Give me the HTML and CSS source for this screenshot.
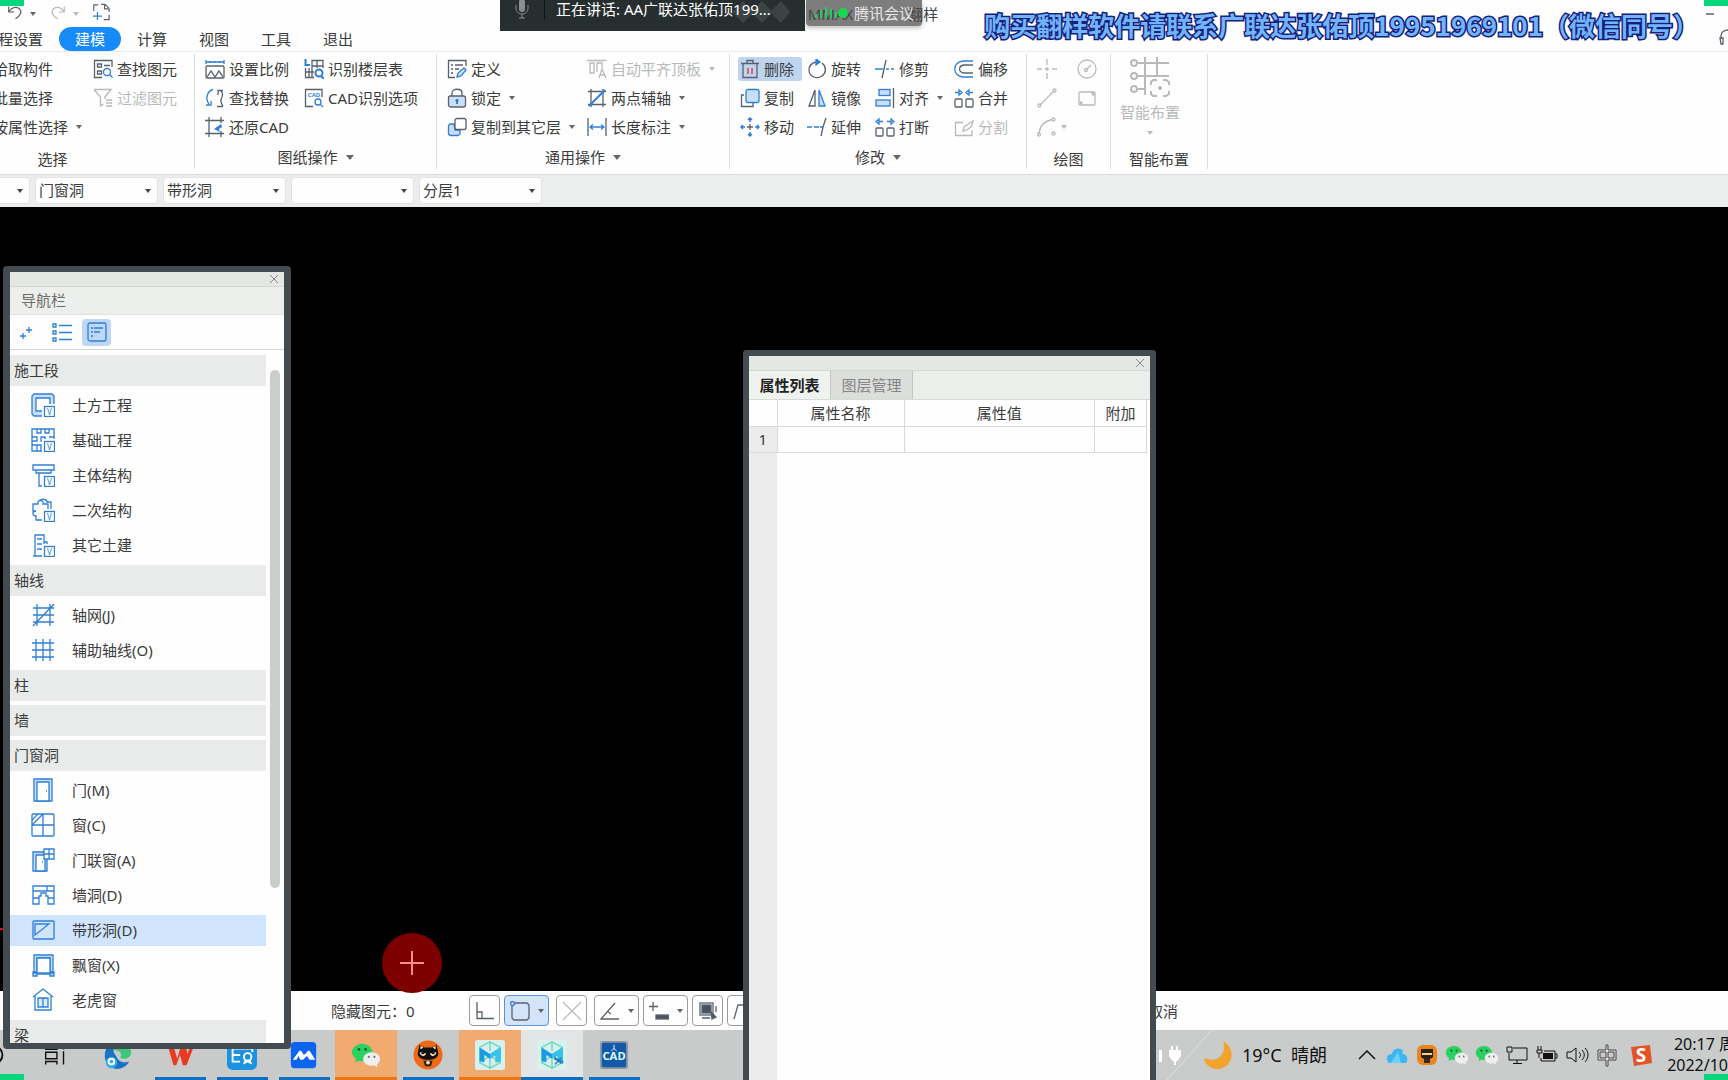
FILE: index.html
```
<!DOCTYPE html>
<html lang="zh-CN">
<head>
    <meta charset="UTF-8">
    <meta name="viewport" content="width=device-width, initial-scale=1.0">
    <title>MMAX 翻样</title>
    <link rel="stylesheet" href="styles.css">
</head>
<body>
    <svg class="defs" aria-hidden="true">
        <symbol id="vbadge" viewBox="0 0 24 24">
            <rect x="11" y="11" width="13" height="13" fill="#fff" stroke="none"/>
            <rect x="13.500" y="13.500" width="10" height="10" fill="#fff" stroke="#2f7fd0"/>
            <text x="18.500" y="21.500" font-size="8" text-anchor="middle" fill="#2f7fd0" stroke="none">V</text>
        </symbol>
        <symbol id="wechat" viewBox="0 0 32 32">
            <path d="M12 4C6 4 1 8 1 13c0 3 2 5.500 4.500 7L4.500 24l4-2c1 .3 2.300.5 3.500.5 6 0 11-4 11-9S18 4 12 4z" fill="#2ad060"/>
            <path d="M22 13c-5 0-9 3.200-9 7.200s4 7.300 9 7.300c1 0 2-.2 3-.4l3.500 1.900-1-3.200c2-1.300 3.500-3.300 3.500-5.600 0-4-4-7.200-9-7.200z" fill="#eee"/>
            <circle cx="8.500" cy="10" r="1.500" fill="#186030"/><circle cx="15.500" cy="10" r="1.500" fill="#186030"/>
            <circle cx="19" cy="18" r="1.200" fill="#777"/><circle cx="25" cy="18" r="1.200" fill="#777"/>
        </symbol>
        <symbol id="cat" viewBox="0 0 32 32">
            <circle cx="16" cy="16" r="15.500" fill="#ee6a14"/>
            <path d="M7 5l5 3h8l5-3 2 9c0 5-5 7-11 7S5 19 5 14z" fill="#111"/>
            <path d="M8 6l3 2-3 2zM24 6l-3 2 3 2z" fill="#fff3cf"/>
            <path d="M7 13l7 1.500c-1 3.500-6 3.500-7-1.500zM25 13l-7 1.500c1 3.500 6 3.500 7-1.500z" fill="#fff3cf"/>
            <path d="M9 14.500h3M20 14.500h3" stroke="#111" stroke-width="1.500"/>
            <path d="M11 22h10l-2 6h-6z" fill="#222"/><circle cx="16" cy="24" r="2" fill="#ffd9a0"/>
        </symbol>
        <symbol id="cube" viewBox="0 0 32 32">
            <rect x="0" y="0" width="32" height="32" rx="3" fill="#d9f1ee"/>
            <path d="M16 2l11 6v16l-11 6-11-6V8zM16 2v10M5 24l11-7 11 7M16 30V17" fill="none" stroke="#6fd6bd" stroke-width="1.500"/>
            <path d="M5 8l11 7 11-7v14l-5 2v-8l-6 4-6-4v8l-5-2z" fill="#1c9be2"/><path d="M27 8v14l-5 2v-8l-6 4v-5z" fill="#35c3ec"/>
        </symbol>
    </svg>

    <!-- 标题栏 -->
    <header class="titlebar">
        <button class="quick" aria-label="撤销"><svg class="ico" viewBox="0 0 20 20"><path d="M3 4v6h6M3.500 9.500C6 5 11 3.500 14.500 6c4 3.500 2 8-4 11.500"/></svg></button>
        <span class="caret"></span>
        <button class="quick off" aria-label="重做"><svg class="ico" viewBox="0 0 20 20"><path d="M17 4v6h-6M16.500 9.500C14 5 9 3.500 5.500 6c-4 3.500-2 8 4 11.500"/></svg></button>
        <span class="caret off"></span>
        <button class="quick" aria-label="新建"><svg class="ico" viewBox="0 0 20 20"><path d="M2 9V2h5M10 1.500h4.500L19 6v4M14 2v4.500h4M19 13v5.500h-6"/><path class="b" d="M6 10v9M1 14.500h10"/></svg></button>
        <div class="app-title"><span>MMAX</span><span>翻样</span></div>
        <svg class="minimize" viewBox="0 0 8 4"><path d="M0 2h8" stroke="#888" stroke-width="2"/></svg>
    </header>

    <nav class="tabs">
        <button class="tab">工程设置</button>
        <button class="tab active">建模</button>
        <button class="tab">计算</button>
        <button class="tab">视图</button>
        <button class="tab">工具</button>
        <button class="tab">退出</button>
        <svg class="headset ico" viewBox="0 0 20 20"><path d="M3 12V9c0-8 14-8 14 0v3M2 11h3v6H3zM17 11v5c0 2-3 3-6 3"/></svg>
    </nav>

    <!-- 功能区 -->
    <section class="ribbon">
        <div class="group group-select">
            <div class="tools cols-select">
                <button class="tool"><svg class="ico" viewBox="0 0 20 20"><path d="M3 3l12 6-5 2-2 5z"/></svg>拾取构件</button>
                <button class="tool"><svg class="ico" viewBox="0 0 20 20"><path d="M19 8V1.500H1.500v17H9M4.500 5h4v3h-4zM4.500 12h4v3h-4zM11 6.500h6"/><circle class="b" cx="14" cy="13" r="3.500"/><path class="b" d="M16.500 15.500l3 3"/></svg>查找图元</button>
                <button class="tool"><svg class="ico" viewBox="0 0 20 20"><path d="M3 3h12v12H3z"/></svg>批量选择</button>
                <button class="tool" disabled><svg class="ico" viewBox="0 0 20 20"><path d="M1 1.500h17L12 9v2M1 1.500L7.500 9v9l3-2M13 12h6M13 15h6M13 18h6"/></svg>过滤图元</button>
                <button class="tool"><svg class="ico" viewBox="0 0 20 20"><path d="M3 3h12v12H3z"/></svg>按属性选择<span class="caret"></span></button>
            </div>
            <div class="caption">选择</div>
        </div>

        <div class="group">
            <div class="tools cols-drawing">
                <button class="tool"><svg class="ico" viewBox="0 0 20 20"><path class="b" d="M1 3h18M1 1v4M19 1v4M5 2v2M10 2v2M15 2v2"/><rect x="1" y="7" width="18" height="12" rx="1"/><path d="M2 18l4-6 4 6 4-6 4 6"/></svg>设置比例</button>
                <button class="tool"><svg class="ico" viewBox="0 0 20 20"><path class="b" d="M1.500 0v6H6" stroke-width="2"/><path d="M8 7V1.500h11V9M13 1v8M8 7h11M8 7v12M1.500 9v9.500H10M1 13h9M5 9v9"/><circle class="b" cx="15" cy="14" r="3.500" stroke-width="2"/><path class="b" d="M17 17l3 3" stroke-width="2"/></svg>识别楼层表</button>
                <button class="tool"><svg class="ico" viewBox="0 0 20 20"><path class="b" d="M8 1.500C2 3 0 11 4 16M6 13v4H1"/><path d="M12 18.500h6M18 18c-2-3-3-5-1-9 1-3 0-5-1-6M13 7V2.500h5"/></svg>查找替换</button>
                <button class="tool"><svg class="ico" viewBox="0 0 20 20"><path d="M9 18.500H1.500v-17H18V9"/><text x="10" y="9" font-size="6" font-weight="700" text-anchor="middle" fill="#3d8be0" stroke="none">CAD</text><circle class="b" cx="14" cy="14" r="3"/><path class="b" d="M16 16l3 3"/></svg>CAD识别选项</button>
                <button class="tool"><svg class="ico" viewBox="0 0 20 20"><path d="M0 3.500h19M4 0v20M0 16.500h19M16 0v6M16 14v6"/><path d="M16 7l-7 5 6 3-1-3 3-2z" fill="#2f7fd6" stroke="none"/></svg>还原CAD</button>
            </div>
            <button class="caption">图纸操作<span class="caret big"></span></button>
        </div>

        <div class="group">
            <div class="tools cols-common">
                <button class="tool"><svg class="ico" viewBox="0 0 20 20"><path d="M8 18.500H1.500v-17H19V7M4 6h2M8 6h8M4 10h2M8 10h4M4 14h2"/><path class="b" d="M10 18l1-4 6-5 2 2-5 6z" fill="#cfe3fb"/></svg>定义</button>
                <button class="tool" disabled><svg class="ico" viewBox="0 0 20 20"><path d="M0 1.500h19M3 4h4v10H3zM10 13V4h5v5M12 19l3-9 4 9M13 16h5"/></svg>自动平齐顶板<span class="caret"></span></button>
                <button class="tool"><svg class="ico" viewBox="0 0 20 20"><path d="M5 8V5c0-5 10-5 10 0v3"/><rect x="1.500" y="8" width="17" height="11" rx="2" fill="#c9dff8"/><path class="b" d="M10 11v5M8.500 12.500h3" stroke-width="2"/></svg>锁定<span class="caret"></span></button>
                <button class="tool"><svg class="ico" viewBox="0 0 20 20"><path d="M1 3.500h18M4 1v18M1 16.500h18M16 1v18"/><path class="b" d="M2 18L18 2" stroke-width="2"/></svg>两点辅轴<span class="caret"></span></button>
                <button class="tool"><svg class="ico" viewBox="0 0 20 20"><path class="b" d="M7 7H3L1.500 8.500V17L3 18.500h8l2-1.500v-4H8z" fill="#c9dff8"/><rect x="8" y="1.500" width="11" height="11" rx="2" fill="#fff"/></svg>复制到其它层<span class="caret"></span></button>
                <button class="tool"><svg class="ico" viewBox="0 0 20 20"><path d="M1 1v18M19 1v18"/><path class="b" d="M3 10h14M6 7.500L3 10l3 2.500M14 7.500l3 2.500-3 2.500"/></svg>长度标注<span class="caret"></span></button>
            </div>
            <button class="caption">通用操作<span class="caret big"></span></button>
        </div>

        <div class="group">
            <div class="tools cols-modify">
                <button class="tool selected"><svg class="ico" viewBox="0 0 20 20"><path d="M1 4.500h18M7 4V1.500h6V4M3 5v13.500h14V5"/><path d="M8 9v6M12 9v6" stroke="#e0405a" stroke-width="1.500"/></svg>删除</button>
                <button class="tool"><svg class="ico" viewBox="0 0 20 20"><path d="M15 4c5 4 4 10 0 13-6 4-13 0-13-6 0-4 3-7 7-8"/><path class="b" d="M9 0l4 3-4 3z" fill="#2f7fd6"/></svg>旋转</button>
                <button class="tool"><svg class="ico" viewBox="0 0 20 20"><path d="M11 1L7 19"/><path class="b" d="M0 10h8M11 10h3M16 10h3"/></svg>修剪</button>
                <button class="tool"><svg class="ico" viewBox="0 0 20 20"><path class="b" d="M19 2H9C-2 3-2 17 9 18h10"/><path d="M19 6h-9c-6 1-6 7 0 8h9"/></svg>偏移</button>

                <button class="tool"><svg class="ico" viewBox="0 0 20 20"><path d="M4 7H1.500v11.500H13V15"/><rect class="b" x="6" y="1.500" width="13" height="13" rx="2" fill="#c9dff8"/></svg>复制</button>
                <button class="tool"><svg class="ico" viewBox="0 0 20 20"><path d="M8 2v16H2z"/><path class="b" d="M12 2v16h6z" fill="#c9dff8"/></svg>镜像</button>
                <button class="tool"><svg class="ico" viewBox="0 0 20 20"><rect class="b" x="4" y="1.500" width="11" height="6" fill="#c9dff8"/><rect class="b" x="1" y="12" width="14" height="6" fill="#c9dff8"/><path d="M18.500 0v20"/></svg>对齐<span class="caret"></span></button>
                <button class="tool"><svg class="ico" viewBox="0 0 20 20"><rect x="1" y="11" width="7" height="8" rx="1"/><rect x="12" y="11" width="7" height="8" rx="1"/><path class="b" d="M1 4.500h4M5 2l3 2.500L5 7zM19 4.500h-4M15 2l-3 2.500L15 7z"/></svg>合并</button>

                <button class="tool"><svg class="ico" viewBox="0 0 20 20"><path d="M7 10h6M10 7v6"/><path class="b" d="M8 3l2-2 2 2M8 17l2 2 2-2M3 8l-2 2 2 2M17 8l2 2-2 2M10 1v4M10 15v4M1 10h4M15 10h4" stroke-width="1.500"/></svg>移动</button>
                <button class="tool"><svg class="ico" viewBox="0 0 20 20"><path class="b" d="M0 10h5M7 10h5M13 10h3"/><path d="M19 1l-3 9-2 9"/></svg>延伸</button>
                <button class="tool"><svg class="ico" viewBox="0 0 20 20"><rect x="1" y="11" width="7" height="8" rx="1"/><rect x="12" y="11" width="7" height="8" rx="1"/><path class="b" d="M8 4.500H4M4 2L1 4.500 4 7zM12 4.500h4M16 2l3 2.500L16 7z"/></svg>打断</button>
                <button class="tool" disabled><svg class="ico" viewBox="0 0 20 20"><path d="M9 5.500H1.500v13H18V13M9 14l1-4 9-6c0 5-4 9-10 10z"/></svg>分割</button>
            </div>
            <button class="caption">修改<span class="caret big"></span></button>
        </div>

        <div class="group">
            <div class="tools cols-draw">
                <button class="tool" disabled aria-label="点"><svg class="ico" viewBox="0 0 20 20"><path d="M10 0v6M10 14v6M0 10h5M15 10h5M8 10h4M10 8v4"/></svg></button>
                <button class="tool" disabled aria-label="圆"><svg class="ico" viewBox="0 0 20 20"><circle cx="10" cy="10" r="9"/><path d="M10 10l4-4"/><circle cx="9" cy="11" r="1.500"/></svg></button>
                <button class="tool" disabled aria-label="直线"><svg class="ico" viewBox="0 0 20 20"><path d="M3 17L17 3"/><circle cx="2.500" cy="17.500" r="1.500"/><circle cx="17.500" cy="2.500" r="1.500"/></svg></button>
                <button class="tool" disabled aria-label="矩形"><svg class="ico" viewBox="0 0 20 20"><rect x="2" y="4" width="16" height="13" rx="1"/><circle cx="4" cy="15" r="1"/><circle cx="16" cy="6" r="1"/></svg></button>
                <button class="tool" disabled aria-label="弧"><svg class="ico" viewBox="0 0 20 20"><path d="M2 16C3 9 8 4 15 2.500"/><circle cx="2" cy="17.500" r="1.500"/><circle cx="16.500" cy="2.500" r="1.500"/><circle cx="16.500" cy="16.500" r="1.500"/></svg><span class="caret"></span></button>
            </div>
            <div class="caption">绘图</div>
        </div>

        <div class="group group-smart">
            <button class="smart" disabled>
                <svg class="ico" viewBox="0 0 40 40"><path stroke-width="2" d="M7 6h32M7 19h32M7 32h9M15 0v38M27 0v18"/><circle stroke-width="2" cx="4" cy="6" r="3"/><circle stroke-width="2" cx="4" cy="19" r="3"/><circle stroke-width="2" cx="4" cy="32" r="3"/><path stroke-width="2" d="M27 23h-4l-2 2v3M33 23h3l3 2v3M21 34v3l2 2h4M39 34v3l-3 2h-3M28 31h4M30 29v4"/></svg>
                智能布置
                <span class="caret"></span>
            </button>
            <div class="caption">智能布置</div>
        </div>
    </section>

    <div class="filters">
        <label class="combo"><select aria-label="楼层"><option></option></select></label>
        <label class="combo"><select aria-label="分类"><option>门窗洞</option></select></label>
        <label class="combo"><select aria-label="构件类型"><option>带形洞</option></select></label>
        <label class="combo"><select aria-label="构件"><option></option></select></label>
        <label class="combo"><select aria-label="分层"><option>分层1</option></select></label>
    </div>

    <!-- 绘图区 -->
    <main class="canvas"></main>

    <footer class="status">
        <span class="hidden-count">隐藏图元：0</span>
        <div class="snap">
            <button aria-label="正交"><svg class="ico" viewBox="0 0 20 20"><path d="M2 1v16.500h17M2 11h5v6"/></svg></button>
            <button class="wide on" aria-label="捕捉"><svg class="ico" viewBox="0 0 20 20"><path d="M5 2h12l2 2v13l-2 2H4l-2-2V5"/><circle class="b" cx="2.500" cy="2.500" r="2"/></svg><span class="caret"></span></button>
        </div>
        <div class="snap">
            <button class="off" aria-label="交点"><svg class="ico" viewBox="0 0 20 20"><path d="M1 1l18 18M19 1L1 19"/></svg></button>
        </div>
        <div class="snap">
            <button class="wide" aria-label="角度"><svg class="ico" viewBox="0 0 20 20"><path d="M15 2L1 18h18M7 10l4 3"/></svg><span class="caret"></span></button>
            <button class="wide" aria-label="动态输入"><svg class="ico" viewBox="0 0 20 20"><path d="M4 1v9M0 5.500h9"/><rect x="7" y="14" width="13" height="4" fill="#4b5160"/></svg><span class="caret"></span></button>
            <button aria-label="选择模式"><svg class="ico" viewBox="0 0 20 20"><rect x="2" y="2" width="13" height="12"/><rect x="4" y="4" width="9" height="8" fill="#4b5160"/><path d="M4 17h8M18 5v6"/><path d="M13 11l5 5-4 2z" fill="#4b5160"/></svg></button>
            <button class="wide" aria-label="折线"><svg class="ico" viewBox="0 0 20 20"><path d="M1 18l4-14h13"/></svg><span class="caret"></span></button>
        </div>
        <button class="cancel">取消</button>
    </footer>

    <!-- 任务栏 -->
    <div class="taskbar">
        <div class="apps">
            <button class="app" aria-label="搜索"><svg viewBox="0 0 32 32"><circle cx="16" cy="16" r="9" fill="none" stroke="#111" stroke-width="2"/></svg></button>
            <button class="app" aria-label="任务视图"><svg viewBox="0 0 32 32"><path d="M5 7v3h12V7M5 13h12v7H5zM5 26v-3h12v3M24 12v14M24 7v3" fill="none" stroke="#111" stroke-width="1.500"/></svg></button>
            <button class="app" aria-label="Edge"><svg viewBox="0 0 32 32"><path d="M2 15C3 6 9 2 16 2c9 0 14 6 14 11 0 5-4 7-8 7-3 0-4-1-3-3 1-4-3-7-8-6-4 0-7 2-9 4z" fill="#3cc878"/><path d="M2 15C3 6 9 2 15 2c-4 3-6 9-1 15 2 6 8 8 14 6-3 5-8 8-13 8C6 30 1 23 2 15z" fill="#1674c4"/><circle cx="9" cy="24" r="6" fill="#35aee5"/><circle cx="9" cy="23" r="3" fill="none" stroke="#fff" stroke-width="2"/></svg></button>
            <button class="app running" aria-label="WPS"><svg viewBox="0 0 32 32"><path d="M3 6h6l4 14 4-14h5l2 9 3-9h4l-8 21h-4l-3-11-4 11H9z" fill="#e93a22"/></svg></button>
            <button class="app running" aria-label="证书工具"><svg viewBox="0 0 32 32"><rect x="0" y="0" width="32" height="32" rx="6" fill="#1b93e0"/><path d="M5 9h22M6 10v14M6 16h8M6 23h8M27 9v4" stroke="#fff" stroke-width="2" fill="none"/><circle cx="22" cy="18" r="4" fill="none" stroke="#fff" stroke-width="2"/><path d="M19 21l-2 5 5-2 5 2-2-5" fill="#fff"/></svg></button>
            <button class="app running" aria-label="腾讯会议"><svg viewBox="0 0 32 32"><rect x="2" y="2" width="27" height="28" rx="4" fill="#0b64f2"/><path d="M4 21l6-8c1-2 3-2 4 0l2 3 3-3c1-2 3-2 4 0l5 8h-6l-3-4-4 4h-3l-2-4-2 4z" fill="#fff"/></svg></button>
            <button class="app alert" aria-label="微信"><svg viewBox="0 0 32 32"><use href="#wechat"/></svg></button>
            <button class="app running" aria-label="浏览器"><svg viewBox="0 0 32 32"><use href="#cat"/></svg></button>
            <button class="app alert" aria-label="建模软件"><svg viewBox="0 0 32 32"><use href="#cube"/></svg></button>
            <button class="app running current" aria-label="翻样软件"><svg viewBox="0 0 32 32"><use href="#cube"/><path d="M19 19l7 6M26 19l-7 7M20 18c-3 3 2 4 3 2M27 25c2-3-2-4-3-1" stroke="#2176bd" stroke-width="1.500" fill="none"/></svg></button>
            <button class="app running" aria-label="CAD"><svg viewBox="0 0 32 32"><rect x="1" y="1" width="30" height="30" rx="3" fill="#8d99a5"/><rect x="3" y="3" width="26" height="26" rx="2" fill="#1459a6"/><text x="16" y="21" font-size="12" font-weight="700" text-anchor="middle" fill="#dff">CAD</text><path d="M16 5v5M13 12l3-3 3 3" stroke="#dff" fill="none"/></svg></button>
        </div>
        <div class="tray">
            <svg class="plug" viewBox="0 0 24 24"><path d="M0 8h2v10H0M13 3v5M18 3v5M11 8h10v5l-3 4h-4l-3-4zM16 17v5" fill="#fff" stroke="#fff" stroke-width="2"/></svg>
            <svg class="streak" viewBox="0 0 48 50"><path d="M2 50L47 0" stroke="#dbe3e5"/></svg>
            <button class="weather"><svg viewBox="0 0 30 30"><path d="M20 1c14 8 10 28-6 28-7 0-12-5-13-11 14 6 23-4 19-17z" fill="#f2a32c"/></svg>19°C&nbsp; 晴朗</button>
            <div class="tray-icons">
                <svg viewBox="0 0 24 24"><path d="M4 16l8-8 8 8" fill="none" stroke="#111" stroke-width="1.500"/></svg>
                <svg viewBox="0 0 24 24"><path d="M4 20c-4-4-2-9 3-9 1-6 8-7 11-3l-1 3c5-1 7 5 4 9z" fill="#3bb6f1"/><path d="M6 20l7-11 3 11z" fill="#6dd0f8"/></svg>
                <svg viewBox="0 0 24 24"><rect x="2" y="2" width="20" height="20" rx="6" fill="#e8851c"/><path d="M6 6h12v8c-3 3-9 3-12 0z" fill="#2b2016"/><path d="M7 10h10v2H7z" fill="#f5cf94"/><path d="M9 16h6v4H9z" fill="#3a2a19"/></svg>
                <svg viewBox="0 0 32 32"><use href="#wechat"/></svg>
                <svg viewBox="0 0 32 32"><use href="#wechat"/></svg>
                <svg viewBox="0 0 24 24"><path d="M8 5h14v12H4v-7M12 17v3M8 20.500h9M2 4h5v5H2z" fill="none" stroke="#111"/></svg>
                <svg viewBox="0 0 24 24"><path d="M9 8h11v10H6v-3M20 11h2v4h-2M3 3v4M6 3v4M2 7h5v3H2zM4 10v5" fill="none" stroke="#111"/><path d="M8 10h10v6H8z" fill="#111"/></svg>
                <svg viewBox="0 0 24 24"><path d="M2 9h4l5-4v14l-5-4H2zM14 9c2 2 2 4 0 6M17 7c3 3 3 7 0 10M20 5c4 4 4 10 0 14" fill="none" stroke="#111"/></svg>
                <svg viewBox="0 0 24 24"><path d="M11 2h2v5h8v10h-8v6h-2v-6H3V7h8zM5 9v6h6V9zM13 9v6h6V9z" fill="#e4e4e4" stroke="#444" fill-rule="evenodd"/></svg>
            </div>
            <svg class="ime" viewBox="0 0 24 24"><path d="M2 4l19-2 2 18-18 3z" fill="#e2532a"/><text x="12" y="19" font-size="19" font-weight="700" text-anchor="middle" fill="#fff">S</text></svg>
            <div class="clock"><span>20:17 周</span><span>2022/10</span></div>
        </div>
    </div>

    <!-- 导航栏窗口 -->
    <aside class="window nav-window">
        <div class="window-bar"><button class="close" aria-label="关闭"><svg viewBox="0 0 10 10"><path d="M1 1l8 8M9 1L1 9"/></svg></button></div>
        <h2 class="window-title">导航栏</h2>
        <div class="nav-modes">
            <button aria-label="展开"><svg class="ico blue" viewBox="0 0 20 20"><path d="M6 11v6M3 14h6M12 5v6M9 8h6"/></svg></button>
            <button aria-label="列表"><svg class="ico blue" viewBox="0 0 20 20"><path d="M1 2h3v3H1zM1 9h3v3H1zM1 16h3v3H1zM7 3.500h13M7 10.500h13M7 17.500h13"/></svg></button>
            <button class="on" aria-label="图标"><svg class="ico blue" viewBox="0 0 20 20"><rect x="1" y="1" width="18" height="18" rx="2"/><path d="M4 6h2M7 6h9M4 10h2M7 10h6M4 14h2"/></svg></button>
        </div>
        <div class="nav-body">
            <div class="nav-list">
                <h3>施工段</h3>
                <button><svg class="ico blue" viewBox="0 0 24 24"><path d="M12 23H3l-2-2V3l2-2h18l2 2v9" fill="#c9dff8"/><path d="M12 18H5V5h14v7" fill="#fff"/><use href="#vbadge"/></svg>土方工程</button>
                <button><svg class="ico blue" viewBox="0 0 24 24"><path d="M1 1h22v22H1zM6 1v4h4V1M14 1v4h4V1M1 9h5v4H1M10 9h4v4h-4zM18 9h5v4M1 17h5v6M6 17h4v6"/><use href="#vbadge"/></svg>基础工程</button>
                <button><svg class="ico blue" viewBox="0 0 24 24"><path d="M2 2h21v5H2zM5 7v3h15V7M8 10v13h5M17 10v3"/><use href="#vbadge"/></svg>主体结构</button>
                <button><svg class="ico blue" viewBox="0 0 24 24"><path d="M11 22H5v-4c-4 0-4-5 0-5h-3V6h5c-1-5 6-5 5 0h5v5M9 3c1-3 7-2 7 1h4v7"/><use href="#vbadge"/></svg>二次结构</button>
                <button><svg class="ico blue" viewBox="0 0 24 24"><path d="M2 23h11M4 23V2h9v20M6 6h5M6 11h5M6 16h5M13 9h3v4"/><use href="#vbadge"/></svg>其它土建</button>
                <h3>轴线</h3>
                <button><svg class="ico blue" viewBox="0 0 24 24"><path d="M2 5h21M2 12h21M2 19h21M6 1v22M19 1v22M2 23L23 1"/></svg>轴网(J)</button>
                <button><svg class="ico blue" viewBox="0 0 24 24"><path d="M1 5h22M1 12h22M1 19h22M5 1v22M12 1v22M19 1v22"/></svg>辅助轴线(O)</button>
                <h3>柱</h3>
                <h3>墙</h3>
                <h3>门窗洞</h3>
                <button><svg class="ico blue" viewBox="0 0 24 24"><path d="M3 23V1h18v22z" fill="#c9dff8"/><path d="M6 23V4h12v19z" fill="#fff"/><path d="M15 13h1"/></svg>门(M)</button>
                <button><svg class="ico blue" viewBox="0 0 24 24"><rect x="1" y="1" width="22" height="22" rx="1"/><path d="M12 1v22M1 12h22M1 7l6-6M1 12L12 1"/></svg>窗(C)</button>
                <button><svg class="ico blue" viewBox="0 0 24 24"><path d="M2 23V4h11v6h3v13z" fill="#c9dff8"/><path d="M5 23V7h9v16z" fill="#fff"/><path d="M13 1h10v10H13zM18 1v10M13 6h10M11 14h1" fill="#fff"/></svg>门联窗(A)</button>
                <button><svg class="ico blue" viewBox="0 0 24 24"><path d="M2 3h21v18h-6v-8h-2v-3h-5v3H8v8H2zM2 8h21M16 3v5M2 15h6M17 15h6"/></svg>墙洞(D)</button>
                <button class="current"><svg class="ico blue" viewBox="0 0 24 24"><rect x="2" y="3" width="21" height="18" rx="1"/><path d="M4 6h14L4 17z"/></svg>带形洞(D)</button>
                <button><svg class="ico blue" viewBox="0 0 24 24"><path d="M3 20V2h19v18h-3V5H6v15zM2 19h4v4H2zM19 19h4v4h-4zM6 21h13" fill="#c9dff8"/><path d="M6 5h13v15H6z" fill="#fff"/></svg>飘窗(X)</button>
                <button><svg class="ico blue" viewBox="0 0 24 24"><path d="M2 9l10-8 10 8" fill="#fff"/><path d="M4 8v14h16V8"/><path d="M7 19V10h10v9zM12 10v9" fill="#dceafb"/></svg>老虎窗</button>
                <h3>梁</h3>
            </div>
            <div class="scrollbar"><div class="thumb"></div></div>
        </div>
    </aside>

    <!-- 属性窗口 -->
    <section class="window prop-window">
        <div class="window-bar"><button class="close" aria-label="关闭"><svg viewBox="0 0 10 10"><path d="M1 1l8 8M9 1L1 9"/></svg></button></div>
        <div class="prop-tabs">
            <button class="active">属性列表</button>
            <button>图层管理</button>
        </div>
        <div class="prop-body">
            <table>
                <thead>
                    <tr><th class="num"></th><th class="name">属性名称</th><th>属性值</th><th class="extra">附加</th></tr>
                </thead>
                <tbody>
                    <tr><td class="num">1</td><td></td><td></td><td></td></tr>
                </tbody>
            </table>
            <div class="gutter"></div>
        </div>
    </section>

    <!-- 会议浮层 -->
    <div class="meeting-chip"><svg viewBox="0 0 36 16"><path d="M2 13V9M7 13V5M12 13V2M17 13V4M22 13V7" stroke="#1fd060" stroke-width="2"/><circle cx="29" cy="8" r="5" fill="#17d84f"/></svg>腾讯会议</div>
    <div class="speaking">
        <svg class="mic" viewBox="0 0 14 20"><rect x="4" y="0" width="6" height="13" rx="3" fill="#8a8f90"/><path d="M1 6v3c0 8 12 8 12 0V6M7 15v4M4 19h6" fill="none" stroke="#8a8f90"/></svg>
        <span>正在讲话: AA广联达张佑顶199...</span>
        <svg class="diamonds" viewBox="0 0 60 24"><path d="M12 1l11 11-11 11L1 12zM31 1l11 11-11 11-11-11zM50 1l9 11-9 11-11-11z" fill="#3c4345"/></svg>
    </div>
    <div class="watermark">购买翻样软件请联系广联达张佑顶19951969101（微信同号）</div>

    <div class="pointer"><svg viewBox="0 0 60 60"><circle cx="30" cy="30" r="30" fill="#7c0000"/><path d="M30 18v24M18 30h24" stroke="#ff8d8d" stroke-width="2"/></svg></div>
    <div class="axis-mark"></div>
    <div class="corner top left"></div>
    <div class="corner top right"></div>
    <div class="corner bottom left"></div>
    <div class="corner bottom right"></div>
</body>
</html>
```
FILE: styles.css
```
* {
    box-sizing: border-box;
}

body {
    margin: 0;
    height: 100vh;
    display: flex;
    flex-direction: column;
    overflow: hidden;
    position: relative;
    background: #fdfefd;
    color: #3c3c3c;
    font-family: "Noto Sans", "Noto Sans CJK SC", sans-serif;
    font-size: 15px;
    line-height: 20px;
}

button, select {
    font: inherit;
    color: inherit;
    background: none;
    border: 0;
    padding: 0;
    margin: 0;
    white-space: nowrap;
}

h2, h3 {
    margin: 0;
    font-size: 15px;
    font-weight: 400;
}

.defs {
    position: absolute;
    width: 0;
    height: 0;
}

/* 图标 */
.ico {
    width: 20px;
    height: 20px;
    flex: none;
    fill: none;
    stroke: #59616f;
    stroke-width: 1.3;
}

.ico .b, .ico.blue {
    stroke: #2f7fd6;
}

.caret {
    flex: none;
    border: 3px solid transparent;
    border-top: 4px solid #666;
    border-bottom: 0;
}

.caret.big {
    border-width: 5px 4px 0;
}

.off, button:disabled {
    color: #b8baba;
}

.off .ico, button:disabled .ico {
    stroke: #b8baba;
}

.caret.off, button:disabled .caret {
    border-top-color: #b8baba;
}

/* 标题栏 */
.titlebar {
    flex: none;
    height: 27px;
    display: flex;
    align-items: center;
    padding: 0 14px 0 5px;
}

.quick {
    display: flex;
    margin: 0 5px 3px 0;
}

.quick .ico {
    height: 18px;
}

.titlebar .caret {
    margin-right: 12px;
}

.app-title {
    flex: 1;
    display: flex;
    justify-content: center;
    gap: 55px;
    padding-right: 76px;
    color: #444;
}

.minimize {
    width: 8px;
    height: 4px;
}

.tabs {
    flex: none;
    display: flex;
    height: 25px;
    margin-left: -33px;
    border-bottom: 1px solid #e9ebea;
}

.tab {
    height: 24px;
    padding: 0 16px;
    border-radius: 12px;
}

.tab.active {
    background: #188bfa;
    color: #fff;
}

.headset {
    margin: 0 -10px 0 auto;
}

/* 功能区 */
.ribbon {
    flex: none;
    display: flex;
    height: 123px;
    margin-left: -89px;
    padding-top: 2px;
    border-bottom: 1px solid #d9dbda;
}

.group {
    display: flex;
    flex-direction: column;
    justify-content: space-between;
    height: 115px;
    padding: 3px 0 0 8px;
    border-right: 1px solid #dcdedd;
}

.group-select {
    padding-left: 56px;
}

.tools {
    display: grid;
    grid-auto-rows: 24px;
    row-gap: 5px;
}

.cols-select { grid-template-columns: 124px 103px; }
.cols-drawing { grid-template-columns: 99px 134px; }
.cols-common { grid-template-columns: 140px 144px; }
.cols-modify { grid-template-columns: 67px 68px 79px 74px; }
.cols-draw { grid-template-columns: 40px 35px; }

.tool {
    display: flex;
    align-items: center;
    justify-self: start;
    gap: 4px;
    height: 24px;
    padding: 0 9px 1px 2px;
    border-radius: 3px;
}

.cols-modify .tool {
    padding-right: 8px;
}

.tool .caret {
    margin-left: 4px;
}

.cols-draw .caret {
    margin-left: 0;
}

.tool.selected {
    background: #bfd5ef;
}

.caption {
    display: flex;
    align-items: center;
    justify-content: center;
    gap: 8px;
    height: 20px;
    margin-left: -8px;
}

button.caption {
    margin-bottom: 2px;
}

.group-select .caption {
    margin-left: -56px;
}

.group-smart {
    padding-right: 8px;
}

.group-smart .caption {
    margin-right: -8px;
}

.smart {
    display: flex;
    flex-direction: column;
    align-items: center;
    gap: 5px;
    width: 80px;
    padding-right: 18px;
}

.smart .ico {
    width: 40px;
    height: 40px;
}

.smart .caret {
    margin-top: 4px;
}

/* 构件筛选栏 */
.filters {
    flex: none;
    display: flex;
    gap: 5px;
    height: 32px;
    padding: 2px 0 3px;
    margin-left: -93px;
    background: #ebeeec;
}

.combo {
    position: relative;
    width: 123px;
    height: 27px;
    background: #fdfefd;
    border: 1px solid #e1e4e2;
    border-radius: 4px;
}

.combo select {
    appearance: none;
    width: 100%;
    height: 25px;
    padding: 0 20px 2px 3px;
}

.combo::after {
    content: "";
    position: absolute;
    right: 6px;
    top: 11px;
    border: 3px solid transparent;
    border-top: 4px solid #444;
    border-bottom: 0;
}

.canvas {
    flex: 1;
    background: #000;
}

/* 状态栏 */
.status {
    flex: none;
    display: flex;
    align-items: center;
    gap: 7px;
    height: 39px;
    padding-left: 331px;
}

.hidden-count {
    width: 131px;
}

.snap {
    display: flex;
    gap: 4px;
}

.snap button {
    display: flex;
    align-items: center;
    justify-content: center;
    gap: 8px;
    width: 31px;
    height: 31px;
    border: 1px solid #9a9c9e;
    border-radius: 4px;
}

.snap button.wide {
    width: 45px;
}

.snap button.on {
    background: #d3e3f8;
    border-color: #5b93da;
}

.cancel {
    margin-left: 369px;
}

/* 任务栏 */
.taskbar {
    flex: none;
    display: flex;
    justify-content: space-between;
    height: 50px;
    background: linear-gradient(90deg, #c9caca, #c9cccb);
    color: #111;
}

.apps {
    display: flex;
    margin-left: -37px;
}

.app {
    width: 62px;
    display: flex;
    align-items: center;
    justify-content: center;
    position: relative;
}

.app svg {
    width: 30px;
    height: 30px;
}

.app.running::after {
    content: "";
    position: absolute;
    left: 6px;
    right: 5px;
    bottom: 0;
    height: 3px;
    background: #0e6fc1;
}

.app.alert {
    background: #f1ab70;
    border-bottom: 3px solid #ee7414;
    padding-top: 3px;
}

.app.current {
    background: #e1e5e5;
}

.app.current::after {
    left: 0;
    right: 0;
}

.tray {
    display: flex;
    align-items: center;
}

.plug {
    width: 24px;
    height: 24px;
}

.streak {
    width: 48px;
    height: 50px;
    margin: 0 -10px 0 -18px;
}

.weather {
    display: flex;
    align-items: center;
    gap: 9px;
    font-size: 18px;
    line-height: 24px;
    margin-right: 28px;
}

.weather svg {
    width: 30px;
    height: 30px;
}

.tray-icons {
    display: flex;
    gap: 6px;
}

.tray-icons svg, .ime {
    width: 24px;
    height: 24px;
}

.ime {
    margin-left: 10px;
}

.clock {
    display: flex;
    flex-direction: column;
    align-items: flex-end;
    width: 75px;
    font-size: 16px;
    line-height: 21px;
    white-space: nowrap;
}

.clock span:first-child {
    margin-right: -7px;
}

/* 浮动窗口 */
.window {
    position: absolute;
    display: flex;
    flex-direction: column;
    border: 6px solid #434b50;
    border-radius: 4px;
    background: #fdfefd;
    overflow: hidden;
}

.window-bar {
    flex: none;
    display: flex;
    justify-content: flex-end;
    align-items: center;
    height: 15px;
    padding-right: 5px;
    background: #e5e7e5;
    border-bottom: 1px solid #d5d7d5;
}

.close {
    display: flex;
}

.close svg {
    width: 10px;
    height: 10px;
    stroke: #8c8c8c;
}

.nav-window {
    left: 3px;
    top: 266px;
    bottom: 31px;
    width: 288px;
    border-width: 6px 7px;
}

.window-title {
    flex: none;
    height: 28px;
    padding: 3px 11px;
    background: #edefed;
    border-bottom: 1px solid #dfe1df;
    color: #6c6c6c;
}

.nav-modes {
    flex: none;
    display: flex;
    align-items: center;
    gap: 6px;
    height: 35px;
    padding-left: 2px;
    border-bottom: 1px solid #d5d7d5;
}

.nav-modes button {
    display: flex;
    align-items: center;
    justify-content: center;
    width: 29px;
    height: 27px;
    border-radius: 4px;
}

.nav-modes button.on {
    background: #bdd7f5;
}

.nav-body {
    flex: 1;
    display: flex;
    min-height: 0;
    padding-top: 5px;
}

.nav-list {
    flex: 1;
    display: flex;
    flex-direction: column;
    gap: 4px;
    overflow: hidden;
}

.nav-list h3 {
    flex: none;
    height: 31px;
    padding: 5px 4px;
    background: #e8ebe9;
}

.nav-list button {
    flex: none;
    display: flex;
    align-items: center;
    gap: 17px;
    height: 31px;
    padding: 0 0 2px 21px;
}

.nav-list .ico {
    width: 24px;
    height: 24px;
}

.nav-list .current {
    background: #d0e5fb;
}

.scrollbar {
    width: 18px;
    padding: 15px 4px 0;
}

.thumb {
    height: 77%;
    border-radius: 5px;
    background: #cbcdcb;
}

.prop-window {
    left: 743px;
    top: 350px;
    bottom: 0;
    width: 413px;
    border-bottom: 0;
    border-radius: 4px 4px 0 0;
}

.prop-tabs {
    flex: none;
    display: flex;
    height: 29px;
    background: #eceeec;
    border-bottom: 1px solid #d8dad8;
}

.prop-tabs button {
    width: 82px;
    color: #858585;
    background: #dcdedc;
    border-right: 1px solid #c4c6c4;
}

.prop-tabs .active {
    color: #222;
    font-weight: 700;
    background: #f0f2f0;
}

.prop-body {
    flex: 1;
    display: flex;
    flex-direction: column;
    padding-right: 3px;
}

.prop-body table {
    width: 100%;
    table-layout: fixed;
    border-collapse: collapse;
}

.prop-body th, .prop-body td {
    height: 26px;
    padding: 0;
    font-weight: 400;
    text-align: center;
    border-right: 1px solid #d9dbd9;
    border-bottom: 1px solid #d9dbd9;
}

.prop-body .num { width: 28px; }
.prop-body .name { width: 127px; }
.prop-body .extra { width: 52px; }

.prop-body td.num, .gutter {
    background: #ececec;
}

.gutter {
    flex: 1;
    width: 28px;
}

/* 会议浮层 */
.speaking {
    position: absolute;
    left: 500px;
    top: 0;
    width: 305px;
    height: 31px;
    padding: 0 10px 14px 15px;
    display: flex;
    align-items: center;
    background: #272e2f;
    color: #fff;
}

.speaking span {
    position: relative;
    z-index: 1;
    padding-left: 11px;
    border-left: 1px solid #111;
    white-space: nowrap;
}

.mic {
    width: 14px;
    height: 20px;
    margin-right: 15px;
}

.diamonds {
    position: absolute;
    right: 14px;
    top: 0;
    width: 60px;
    height: 24px;
}

.meeting-chip {
    position: absolute;
    left: 806px;
    top: 0;
    width: 116px;
    height: 26px;
    display: flex;
    align-items: center;
    gap: 4px;
    padding-left: 8px;
    border-radius: 0 0 4px 4px;
    background: rgba(70, 70, 70, 0.7);
    box-shadow: 0 2px 4px rgba(0, 0, 0, 0.25);
    color: #e8e8e8;
}

.meeting-chip svg {
    width: 36px;
    height: 16px;
}

.watermark {
    position: absolute;
    right: 29px;
    top: 7px;
    font-family: "Noto Sans CJK SC", sans-serif;
    font-size: 26px;
    font-weight: 700;
    line-height: 36px;
    color: #72b4fa;
    -webkit-text-stroke: 3px #14207c;
    paint-order: stroke fill;
    white-space: nowrap;
}

.pointer {
    position: absolute;
    left: 382px;
    top: 933px;
    width: 60px;
    height: 60px;
}

.axis-mark {
    position: absolute;
    left: 0;
    top: 928px;
    width: 3px;
    height: 2px;
    background: #e01010;
}

.corner {
    position: absolute;
    width: 24px;
    height: 6px;
    background: #08d67c;
}

.top { top: 0; }
.bottom { bottom: 0; }
.left { left: 0; }
.right { right: 0; }
```
